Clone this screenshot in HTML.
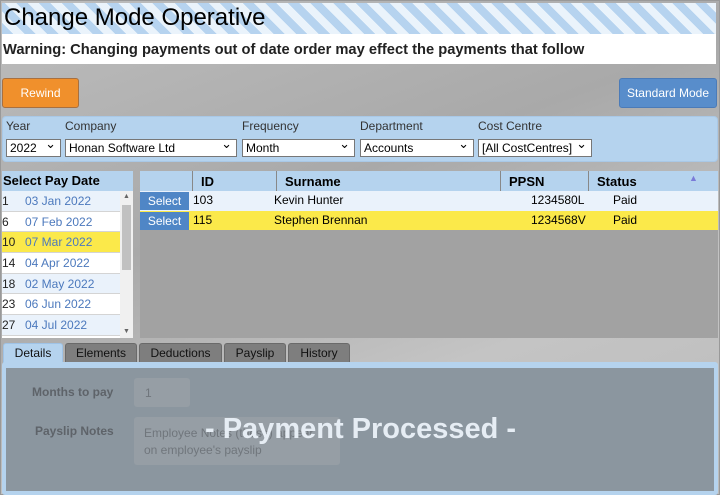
<!DOCTYPE html>
<html><head><style>
*{box-sizing:border-box;margin:0;padding:0}
body{width:720px;height:495px;overflow:hidden;font-family:"Liberation Sans",sans-serif;background:#b4b4b4;position:relative}
.a{position:absolute}
.bg{left:0;top:0;width:720px;height:495px;background:linear-gradient(160deg,#bdbdbd 0%,#a9a9a9 40%,#c4c4c4 70%,#bbb 100%);border:1px solid #999}
.hdr{left:2px;top:3px;width:714px;height:31px;background:repeating-linear-gradient(45deg,#b6d3ef 0 8px,#eaf3fb 8px 16px)}
.hdr span{position:absolute;left:2px;top:1px;font-size:24px;color:#000;line-height:28px}
.warn{left:2px;top:34px;width:714px;height:30px;background:#fff;font-weight:bold;font-size:14.7px;color:#222;padding:8px 0 0 1px}
.btn{color:#fff;font-size:12px;text-align:center;border-radius:3px;line-height:28px}
.filt{left:2px;top:116px;width:716px;height:46px;background:#b5d3ee;border-radius:4px;border:1px solid #a9c8e6}
.lbl{font-size:12px;color:#333}
.sel{height:18px;background:#fff;border:1px solid #777;font-size:12px;line-height:16px;padding-left:3px;color:#000}
.sel:after{content:"⌄";position:absolute;right:4px;top:-4px;font-size:13px}
.list{left:2px;top:171px;width:131px;height:167px;background:#fff;overflow:hidden}
.row{height:20.7px;font-size:12px;line-height:20px;border-bottom:1px solid #d4d4d4;position:relative}
.row b{font-weight:normal;position:absolute;left:0;color:#222}
.row i{font-style:normal;position:absolute;left:23px;color:#4c79bd}
.grid{left:140px;top:171px;width:578px;height:167px;background:#a2a2a2}
.gh{height:20px;background:#b5d3ee;font-weight:bold;font-size:13px;position:relative}
.gr{height:19.5px;font-size:12px;position:relative;line-height:19px}
.sb{position:absolute;left:0;top:1px;width:49px;height:18px;background:#4f86c6;color:#fff;text-align:center;line-height:18px;font-size:12px}
.tab{top:343px;height:19px;background:#7e7e7e;border:1px solid #6a6a6a;border-bottom:none;border-radius:3px 3px 0 0;font-size:12px;color:#111;text-align:center;line-height:18px}
</style></head><body>
<div class="a bg"></div>
<div class="a hdr"><span>Change Mode Operative</span></div>
<div class="a warn">Warning: Changing payments out of date order may effect the payments that follow</div>
<div class="a btn" style="left:2px;top:78px;width:77px;height:30px;background:#f0902c;border:1px solid #a87040">Rewind</div>
<div class="a btn" style="left:619px;top:78px;width:98px;height:30px;background:#588dcb;border:1px solid #4b7bb8">Standard Mode</div>
<div class="a filt"></div>
<div class="a lbl" style="left:6px;top:119px">Year</div>
<div class="a lbl" style="left:65px;top:119px">Company</div>
<div class="a lbl" style="left:242px;top:119px">Frequency</div>
<div class="a lbl" style="left:360px;top:119px">Department</div>
<div class="a lbl" style="left:478px;top:119px">Cost Centre</div>
<div class="a sel" style="left:6px;top:139px;width:55px">2022</div>
<div class="a sel" style="left:65px;top:139px;width:172px">Honan Software Ltd</div>
<div class="a sel" style="left:242px;top:139px;width:113px">Month</div>
<div class="a sel" style="left:360px;top:139px;width:114px">Accounts</div>
<div class="a sel" style="left:478px;top:139px;width:114px">[All CostCentres]</div>
<div class="a list">
<div style="height:20px;background:#b5d3ee;font-weight:bold;font-size:13px;line-height:20px;padding-left:1px">Select Pay Date</div>
<div class="row" style="background:#eaf2fb"><b>1</b><i>03 Jan 2022</i></div>
<div class="row"><b>6</b><i>07 Feb 2022</i></div>
<div class="row" style="background:#fbe94a"><b>10</b><i>07 Mar 2022</i></div>
<div class="row"><b>14</b><i>04 Apr 2022</i></div>
<div class="row" style="background:#eaf2fb"><b>18</b><i>02 May 2022</i></div>
<div class="row"><b>23</b><i>06 Jun 2022</i></div>
<div class="row" style="background:#eaf2fb"><b>27</b><i>04 Jul 2022</i></div>
<div class="a" style="left:118px;top:20px;width:13px;height:147px;background:#f0f0f0"></div>
<div class="a" style="left:120px;top:34px;width:9px;height:65px;background:#c1c1c1"></div>
<div class="a" style="left:121px;top:22px;font-size:7px;color:#666">▲</div>
<div class="a" style="left:121px;top:157px;font-size:7px;color:#666">▼</div>
</div>
<div class="a grid">
<div class="gh">
<span class="a" style="left:52px;top:0;width:1px;height:20px;background:#888"></span>
<span class="a" style="left:61px;top:3px">ID</span>
<span class="a" style="left:136px;top:0;width:1px;height:20px;background:#888"></span>
<span class="a" style="left:145px;top:3px">Surname</span>
<span class="a" style="left:360px;top:0;width:1px;height:20px;background:#888"></span>
<span class="a" style="left:369px;top:3px">PPSN</span>
<span class="a" style="left:448px;top:0;width:1px;height:20px;background:#888"></span>
<span class="a" style="left:457px;top:3px">Status</span>
<span class="a" style="left:549px;top:2px;font-size:9px;color:#7a7ad8">▲</span>
</div>
<div class="gr" style="background:#eaf2fb"><div class="sb">Select</div><span class="a" style="left:53px">103</span><span class="a" style="left:134px">Kevin Hunter</span><span class="a" style="left:391px">1234580L</span><span class="a" style="left:473px">Paid</span></div>
<div class="gr" style="background:#fbe94a"><div class="sb">Select</div><span class="a" style="left:53px">115</span><span class="a" style="left:134px">Stephen Brennan</span><span class="a" style="left:391px">1234568V</span><span class="a" style="left:473px">Paid</span></div>
</div>
<div class="a tab" style="left:3px;width:60px;background:#b5d3ee;border-color:#9fc3e6;height:20px">Details</div>
<div class="a tab" style="left:65px;width:72px">Elements</div>
<div class="a tab" style="left:139px;width:83px">Deductions</div>
<div class="a tab" style="left:224px;width:62px">Payslip</div>
<div class="a tab" style="left:288px;width:62px">History</div>
<div class="a" style="left:2px;top:362px;width:716px;height:133px;background:#b5d3ee;border-radius:3px"></div>
<div class="a" style="left:6px;top:368px;width:708px;height:123px;background:#8b969f"></div>
<div class="a" style="left:32px;top:385px;font-size:12px;font-weight:bold;color:#5e6369">Months to pay</div>
<div class="a" style="left:134px;top:378px;width:56px;height:29px;background:#969ea5;border-radius:3px;font-size:12px;color:#70767c;padding:8px 0 0 11px">1</div>
<div class="a" style="left:35px;top:424px;font-size:12px;font-weight:bold;color:#5e6369">Payslip Notes</div>
<div class="a" style="left:134px;top:417px;width:206px;height:48px;background:#969ea5;border-radius:3px;font-size:12px;color:#70767c;padding:8px 0 0 10px;line-height:17px">Employee Notes (these) appear<br>on employee's payslip</div>
<div class="a" style="left:205px;top:413px;font-size:29px;font-weight:bold;color:#e6edf4">- Payment Processed -</div>
</body></html>
